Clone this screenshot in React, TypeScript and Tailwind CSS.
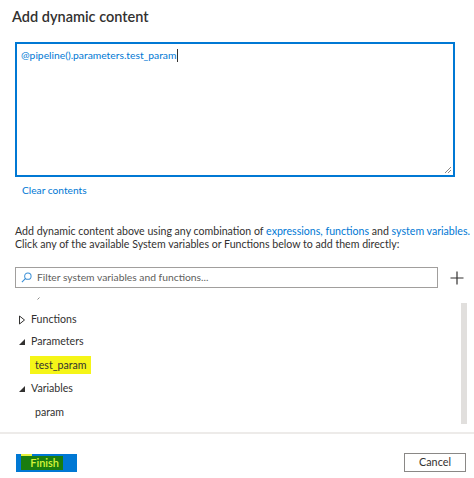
import React from "react";

const blue = "#0078d4";

const Expanded: React.FC = () => (
  <svg width="8" height="8" viewBox="0 0 8 8" className="shrink-0">
    <path d="M7 1 L7 7 L1 7 Z" fill="#323130" />
  </svg>
);

const Collapsed: React.FC = () => (
  <svg width="8" height="10" viewBox="0 0 8 10" className="shrink-0">
    <path d="M1.5 1 L6.5 5 L1.5 9 Z" fill="none" stroke="#323130" strokeWidth="1" />
  </svg>
);

const App: React.FC = () => {
  return (
    <div
      className="w-[474px] h-[478px] bg-white overflow-hidden text-[#323130] flex flex-col"
      style={{ fontFamily: 'Lato, "Noto Sans", sans-serif' }}
    >
      <h1 className="pl-3 pt-[5px] text-[14.5px] leading-[24px] font-semibold">
        Add dynamic content
      </h1>

      <div className="relative mx-[15px] mt-[13px] h-[135px] w-[440px] border-2 border-[#0078d4] px-[4px] pt-[3px]">
        <div className="text-[10.3px] leading-[16px]" style={{ color: blue }}>
          @pipeline().parameters.test_param
          <span className="inline-block w-px h-[13px] align-[-3px] bg-[#323130] ml-[1px]" />
        </div>
        <svg width="8" height="8" viewBox="0 0 8 8" className="absolute right-[1px] bottom-[1px]">
          <path d="M7 1 L1 7 M7 4 L4 7" stroke="#8a8886" strokeWidth="1" />
        </svg>
      </div>

      <button className="self-start ml-[22px] mt-[5px] text-[10.2px] leading-[16px]" style={{ color: blue }}>
        Clear contents
      </button>

      <p className="mx-[15px] mt-[27px] text-[10.6px] leading-[13px] whitespace-nowrap">
        Add dynamic content above using any combination of{" "}
        <span style={{ color: blue }}>expressions, functions</span> and{" "}
        <span style={{ color: blue }}>system variables.</span>
        <br />
        Click any of the available System variables or Functions below to add them directly:
      </p>

      <div className="flex items-center mt-[16px] ml-[15px]">
        <div className="w-[423px] h-[21px] border border-[#a19f9d] flex items-center gap-[5px] pl-[5px]">
          <svg width="11" height="11" viewBox="0 0 12 12">
            <circle cx="7.5" cy="4.5" r="3.5" fill="none" stroke="#3a8fd6" strokeWidth="1.1" />
            <path d="M5 7 L1 11" stroke="#3a8fd6" strokeWidth="1.2" />
          </svg>
          <span className="text-[10.3px] text-[#605e5c]">
            Filter system variables and functions...
          </span>
        </div>
        <svg width="14" height="14" viewBox="0 0 14 14" className="ml-[12px]">
          <path d="M7 0.5 V13.5 M0.5 7 H13.5" stroke="#323130" strokeWidth="1.2" />
        </svg>
      </div>

      <div className="flex mt-[9px] h-[128px]">
        <div className="flex-1 text-[10.6px] overflow-hidden">
          <div className="h-[11px] pl-[37px]">
            <svg width="3" height="3" viewBox="0 0 3 3">
              <path d="M2.5 0.5 L0.5 2.5" stroke="#8a8886" strokeWidth="1" />
            </svg>
          </div>
          <div className="flex items-center h-[23px] pl-[18px] gap-[5px]">
            <Collapsed />
            <span>Functions</span>
          </div>
          <div className="flex items-center h-[22px] pl-[18px] gap-[5px]">
            <Expanded />
            <span>Parameters</span>
          </div>
          <div className="flex items-center h-[24px] pl-[30px]">
            <span className="bg-[#f5f518] pl-[5px] pr-[4px] leading-[18px]">test_param</span>
          </div>
          <div className="flex items-center h-[23px] pl-[18px] gap-[5px]">
            <Expanded />
            <span>Variables</span>
          </div>
          <div className="flex items-center h-[25px] pl-[35px]">
            <span>param</span>
          </div>
        </div>
        <div className="w-[6px] mr-[7px] mt-[6px] h-[121px] bg-[#e1dfdd]" />
      </div>

      <div className="mt-[7px] h-[2px] bg-[#edebe9]" />

      <div className="flex justify-between items-center mt-[19px] px-[16px] pr-[8px]">
        <button className="w-[61px] h-[18px] flex items-center pl-[5px]" style={{ backgroundColor: blue }}>
          <span className="relative bg-[#1a7d0f] w-[42px] h-[14px] flex items-center justify-end pr-[4px] text-[11px] font-semibold text-[#d6f53a] leading-none">
            <span className="absolute left-0 -top-[2px] w-[11px] h-[2px] bg-[#e6ef3c]" />
            Finish
          </span>
        </button>
        <button className="w-[62px] h-[19px] border border-[#8a8886] bg-white text-[10.8px] leading-none text-[#323130]">
          Cancel
        </button>
      </div>
    </div>
  );
};

export default App;
